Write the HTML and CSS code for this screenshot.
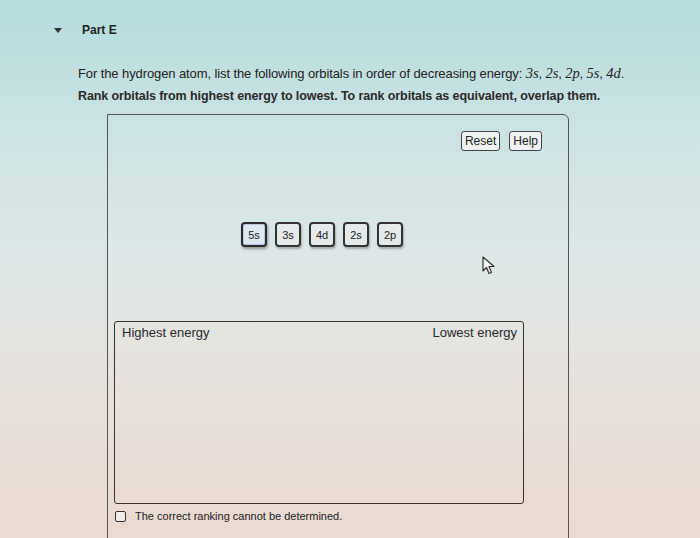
FILE: index.html
```html
<!DOCTYPE html>
<html>
<head>
<meta charset="utf-8">
<link rel="stylesheet" href="styles.css">
</head>
<body>
<div class="page">
  <div class="header">
    <span class="caret"></span>
    <span class="part">Part E</span>
  </div>
  <div class="question">
    <p class="q1">For the hydrogen atom, list the following orbitals in order of decreasing energy: <span class="math">3s</span>, <span class="math">2s</span>, <span class="math">2p</span>, <span class="math">5s</span>, <span class="math">4d</span>.</p>
    <p class="q2">Rank orbitals from highest energy to lowest. To rank orbitals as equivalent, overlap them.</p>
  </div>
  <div class="panel">
    <div class="toolbar">
      <button class="btn">Reset</button>
      <button class="btn">Help</button>
    </div>
    <div class="tiles">
      <div class="tile active">5s</div>
      <div class="tile">3s</div>
      <div class="tile">4d</div>
      <div class="tile">2s</div>
      <div class="tile">2p</div>
      <svg class="cursor" width="14" height="20" viewBox="0 0 14 20">
        <path d="M1 1 L1 15 L4.5 11.5 L7 17.5 L9.5 16.5 L7 10.5 L12 10.5 Z" fill="#f4f4f4" stroke="#333" stroke-width="1.2" stroke-linejoin="round"/>
      </svg>
    </div>
    <div class="rank">
      <div class="rank-labels">
        <span>Highest energy</span>
        <span>Lowest energy</span>
      </div>
    </div>
    <label class="check">
      <span class="box"></span>
      <span class="check-text">The correct ranking cannot be determined.</span>
    </label>
  </div>
</div>
</body>
</html>
```
FILE: styles.css
```css
html, body {
  margin: 0;
  padding: 0;
}
body {
  width: 700px;
  height: 538px;
  overflow: hidden;
  font-family: "Liberation Sans", Arial, sans-serif;
  color: #222;
  background: linear-gradient(180deg, #b5dcdc 0%, #cce3e3 25%, #dfe8e7 50%, #e8e0db 75%, #ead9d1 100%);
}
.page {
  padding-top: 22px;
}
.header {
  display: flex;
  align-items: center;
  padding-left: 54px;
  height: 16px;
}
.caret {
  width: 0;
  height: 0;
  border-left: 4px solid transparent;
  border-right: 4px solid transparent;
  border-top: 5px solid #333;
}
.part {
  margin-left: 20px;
  font-size: 12px;
  font-weight: bold;
  color: #222;
}
.question {
  margin-left: 78px;
  margin-top: 27px;
}
.q1 {
  margin: 0;
  font-size: 13px;
  line-height: 17px;
  letter-spacing: -0.1px;
}
.math {
  font-family: "Liberation Serif", "Times New Roman", serif;
  font-style: italic;
  font-size: 14.5px;
}
.q2 {
  margin: 6px 0 0 0;
  font-size: 12.5px;
  line-height: 17px;
  font-weight: bold;
  letter-spacing: -0.1px;
  color: #2a2a2a;
}
.panel {
  margin-top: 9px;
  margin-left: 107px;
  width: 460px;
  height: 440px;
  border: 1px solid #555;
  border-radius: 0 6px 0 0;
}
.toolbar {
  display: flex;
  justify-content: flex-end;
  gap: 9px;
  padding: 16px 26px 0 0;
}
.btn {
  font-family: "Liberation Sans", Arial, sans-serif;
  font-size: 12px;
  color: #222;
  background: #eef2f2;
  border: 1px solid #444;
  border-radius: 3px;
  padding: 1px 3px;
  height: 20px;
  line-height: 16px;
}
.tiles {
  position: relative;
  display: flex;
  gap: 8px;
  margin-top: 71px;
  margin-left: 133px;
}
.tile {
  width: 22px;
  height: 21px;
  border: 2px solid #333;
  border-radius: 4px;
  background: #e6e9ea;
  font-size: 11px;
  display: flex;
  align-items: center;
  justify-content: center;
  color: #222;
  box-shadow: 1px 2px 2px rgba(0,0,0,0.25);
}
.tile.active {
  background: #dde8f0;
  border-color: #2a2a30;
  box-shadow: 1px 2px 3px rgba(0,0,0,0.35), inset 0 0 0 1px #b8c8d8;
}
.cursor {
  position: absolute;
  left: 241px;
  top: 34px;
}
.rank {
  margin-top: 74px;
  margin-left: 6px;
  width: 408px;
  height: 181px;
  border: 1.5px solid #3a3030;
  border-radius: 3px;
}
.rank-labels {
  display: flex;
  justify-content: space-between;
  padding: 3px 6px 0 7px;
  font-size: 13px;
  color: #2a2a2a;
}
.check {
  display: flex;
  align-items: center;
  margin-top: 6px;
  margin-left: 7px;
}
.box {
  width: 9px;
  height: 9px;
  border: 1px solid #333;
  border-radius: 2px;
  background: #f2eeec;
}
.check-text {
  margin-left: 9px;
  font-size: 11px;
  color: #222;
}
```
